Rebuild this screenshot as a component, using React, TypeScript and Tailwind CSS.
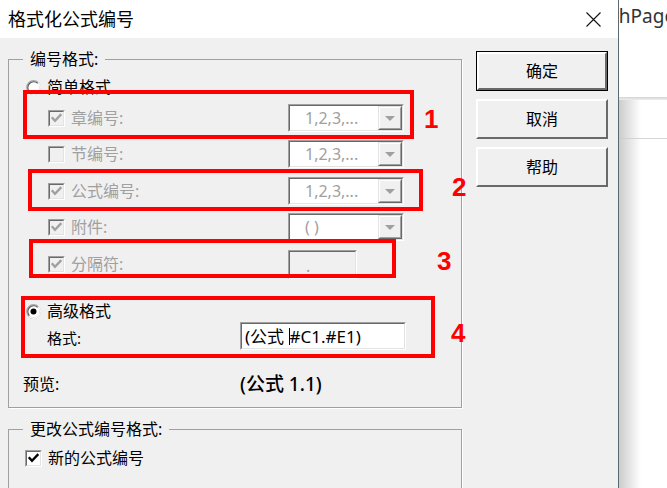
import React from "react";

function Sunken({ className, inner, children }: { className: string; inner: string; children?: React.ReactNode }) {
  return (
    <div className={"border border-t-[#a0a0a0] border-l-[#a0a0a0] border-r-white border-b-white " + className}>
      <div className={"h-full border border-t-[#696969] border-l-[#696969] border-r-[#e3e3e3] border-b-[#e3e3e3] " + inner}>
        {children}
      </div>
    </div>
  );
}

function Check({ checked, disabled }: { checked: boolean; disabled?: boolean }) {
  return (
    <Sunken className="w-[17px] h-[17px] shrink-0" inner={disabled ? "bg-[#f0f0f0]" : "bg-white"}>
      {checked && (
        <svg width="13" height="13" viewBox="0 0 13 13" className="block">
          <path d="M2.5 6 L5 8.8 L10.5 3" fill="none" stroke={disabled ? "#a0a0a0" : "#000"} strokeWidth="2.3" strokeLinecap="square" />
        </svg>
      )}
    </Sunken>
  );
}

function Radio({ checked }: { checked: boolean }) {
  return (
    <svg width="15" height="15" viewBox="0 0 15 15" className="shrink-0 block">
      <circle cx="7.5" cy="7.5" r="6.8" fill="#fff" stroke="#a8a8a8" strokeWidth="1.2" />
      <path d="M3.4 11.6 A5.8 5.8 0 0 1 11.6 3.4" fill="none" stroke="#555555" strokeWidth="1.1" />
      <path d="M12.31 2.69 A6.8 6.8 0 0 1 2.69 12.31" fill="none" stroke="#ffffff" strokeWidth="1.2" />
      {checked && <circle cx="7.5" cy="7.5" r="3" fill="#000" />}
    </svg>
  );
}

function Combo({ text }: { text: string }) {
  return (
    <Sunken className="w-[116px] h-[28px] shrink-0" inner="bg-white flex">
      <div className="flex-1 flex items-center pl-[15px] text-[16px] text-[#a0a0a0] leading-none">{text}</div>
      <div className="w-[24px] h-full border border-t-[#e3e3e3] border-l-[#e3e3e3] border-r-[#696969] border-b-[#696969]">
        <div className="h-full border border-t-white border-l-white border-r-[#a0a0a0] border-b-[#a0a0a0] bg-[#f0f0f0] flex items-center justify-center">
          <svg width="10" height="5" viewBox="0 0 10 5" className="block">
            <path d="M0 0 H10 L5 5 Z" fill="#a0a0a0" />
          </svg>
        </div>
      </div>
    </Sunken>
  );
}

function OptRow({ label, checked, children, className }: { label: string; checked: boolean; children: React.ReactNode; className: string }) {
  return (
    <div className={"flex items-center h-[28px] pl-[39px] " + className}>
      <Check checked={checked} disabled />
      <span className="ml-[6px] w-[217px] text-[16px] text-[#a0a0a0] leading-[20px]">{label}</span>
      {children}
    </div>
  );
}

function Btn({ label, def }: { label: string; def?: boolean }) {
  return (
    <div className={def ? "h-[40px] border border-black" : "h-[40px]"}>
      <div className="h-full border-2 border-t-white border-l-white border-r-[#696969] border-b-[#696969] bg-[#f0f0f0] flex items-center justify-center text-[16px] text-black">
        {label}
      </div>
    </div>
  );
}

export default function App() {
  return (
    <div className="relative w-[667px] h-[488px] overflow-hidden flex bg-white text-black font-['Noto_Sans','Noto_Sans_CJK_SC',sans-serif]">
      <div className="w-[619px] h-full shrink-0 flex flex-col border-r border-[#5b6a72]">
        <div className="h-[38px] shrink-0 bg-white flex items-center justify-between pl-2 pr-[17px]">
          <span className="text-[18px] leading-none">格式化公式编号</span>
          <svg width="15" height="15" viewBox="0 0 15 15" className="block">
            <path d="M0.5 0.5 L14.5 14.5 M14.5 0.5 L0.5 14.5" stroke="#111" strokeWidth="1.1" />
          </svg>
        </div>
        <div className="flex-1 bg-[#f0f0f0] flex pl-2 pr-[10px] gap-[14px]">
          <div className="w-[454px] shrink-0 flex flex-col">
            <fieldset className="mt-[11px] h-[359px] border border-[#a0a0a0] shadow-[1px_1px_0_#fff]">
              <legend className="ml-[14px] px-[7px] text-[16px] leading-[20px]">编号格式:</legend>
              <div className="flex flex-col">
                <div className="mt-[8px] h-[20px] flex items-center pl-[17px]">
                  <Radio checked={false} />
                  <span className="ml-[6px] text-[16px] leading-[20px]">简单格式</span>
                </div>
                <OptRow label="章编号:" checked className="mt-[7px]">
                  <Combo text="1,2,3,..." />
                </OptRow>
                <OptRow label="节编号:" checked={false} className="mt-[8px]">
                  <Combo text="1,2,3,..." />
                </OptRow>
                <OptRow label="公式编号:" checked className="mt-[9px]">
                  <Combo text="1,2,3,..." />
                </OptRow>
                <OptRow label="附件:" checked className="mt-[8px]">
                  <Combo text="( )" />
                </OptRow>
                <OptRow label="分隔符:" checked className="mt-[9px]">
                  <Sunken className="w-[69px] h-[29px]" inner="bg-[#f0f0f0] flex items-end pl-[16px] pb-[3px] text-[16px] text-[#a0a0a0] leading-none">
                    .
                  </Sunken>
                </OptRow>
                <div className="mt-[23px] h-[20px] flex items-center pl-[17px]">
                  <Radio checked />
                  <span className="ml-[6px] text-[16px] leading-[20px]">高级格式</span>
                </div>
                <div className="mt-[1px] h-[28px] flex items-center pl-[38px]">
                  <span className="w-[193px] text-[15px] leading-[20px] pt-[4px]">格式:</span>
                  <Sunken className="w-[166px] h-[28px]" inner="bg-white flex items-center pl-[3px] text-[17px] leading-none whitespace-pre">
                    <span>{"(公式 "}</span>
                    <span className="inline-block w-px h-[17px] bg-black" />
                    <span>#C1.#E1)</span>
                  </Sunken>
                </div>
                <div className="mt-[23px] h-[22px] flex items-center pl-[14px]">
                  <span className="w-[217px] text-[16px] leading-[20px]">预览:</span>
                  <span className="text-[19px] font-medium leading-[22px]">(公式 1.1)</span>
                </div>
              </div>
            </fieldset>
            <fieldset className="mt-[11px] h-[80px] border border-[#a0a0a0] shadow-[1px_1px_0_#fff]">
              <legend className="ml-[14px] px-[7px] text-[16px] leading-[20px]">更改公式编号格式:</legend>
              <div className="mt-[9px] flex items-center pl-[16px]">
                <Check checked />
                <span className="ml-[6px] text-[16px] leading-[20px]">新的公式编号</span>
              </div>
            </fieldset>
          </div>
          <div className="w-[132px] shrink-0 flex flex-col gap-2 pt-[13px]">
            <Btn label="确定" def />
            <Btn label="取消" />
            <Btn label="帮助" />
          </div>
        </div>
      </div>
      <div className="relative flex-1 overflow-hidden bg-white">
        <div className="h-[32px] flex items-center whitespace-nowrap -ml-[7px] text-[19px] text-[#333] leading-none">thPage</div>
        <div className="mt-[65px] h-[3px] bg-gradient-to-b from-[#d4d4d4] to-[#eeeeee]" />
        <div className="mt-[38px] h-px bg-[#d6d6d6]" />
        <div className="absolute left-0 top-[100px] bottom-0 w-[22px] bg-gradient-to-r from-[#cccccc] to-transparent" />
      </div>

      <div className="absolute left-[23px] top-[90px] w-[391px] h-[49px] border-[4px] border-[#ff0000]" />
      <div className="absolute left-[28px] top-[169px] w-[395px] h-[42px] border-[4px] border-[#ff0000]" />
      <div className="absolute left-[29px] top-[239px] w-[367px] h-[39px] border-[4px] border-[#ff0000]" />
      <div className="absolute left-[21px] top-[296px] w-[414px] h-[62px] border-[4px] border-[#ff0000]" />

      <span className="absolute left-[424px] top-[106px] text-[26px] leading-none font-bold text-[#ff0000] font-['Liberation_Sans',sans-serif]">1</span>
      <span className="absolute left-[452px] top-[174px] text-[26px] leading-none font-bold text-[#ff0000] font-['Liberation_Sans',sans-serif]">2</span>
      <span className="absolute left-[437px] top-[248px] text-[26px] leading-none font-bold text-[#ff0000] font-['Liberation_Sans',sans-serif]">3</span>
      <span className="absolute left-[451px] top-[320px] text-[26px] leading-none font-bold text-[#ff0000] font-['Liberation_Sans',sans-serif]">4</span>
    </div>
  );
}
